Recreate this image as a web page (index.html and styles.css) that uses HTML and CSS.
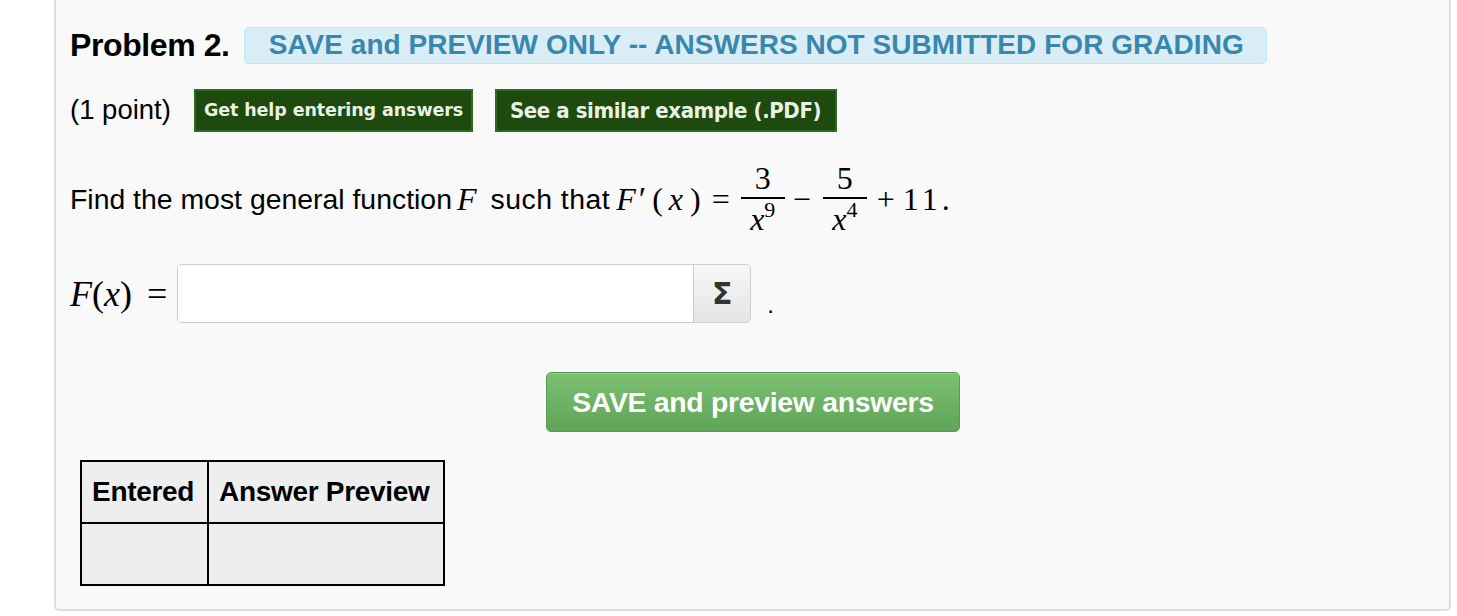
FILE: index.html
```html
<!DOCTYPE html>
<html>
<head>
<meta charset="utf-8">
<link rel="stylesheet" href="styles.css">
</head>
<body>
<div class="page">
  <div class="panel">
    <div class="head-row">
      <h2 class="problem-title">Problem 2.</h2>
      <div class="badge">SAVE and PREVIEW ONLY -- ANSWERS NOT SUBMITTED FOR GRADING</div>
    </div>
    <div class="point-row">
      <span class="points">(1 point)</span>
      <span class="help-btn help-entering">Get help entering answers</span>
      <span class="help-btn help-example">See a similar example (.PDF)</span>
    </div>
    <div class="question">
      <span class="q-text">Find the most general function</span>
      <span class="math var-f"><i>F</i></span>
      <span class="q-text such">such that</span>
      <span class="math fprime"><i>F</i><span class="prime">′</span><span class="paren">(</span><i class="xv">x</i><span class="paren">)</span></span>
      <span class="math op eqop">=</span>
      <span class="frac"><span class="num">3</span><span class="den"><i>x</i><sup>9</sup></span></span>
      <span class="math op minus">−</span>
      <span class="frac"><span class="num">5</span><span class="den"><i>x</i><sup>4</sup></span></span>
      <span class="math op plus">+</span>
      <span class="math eleven">11.</span>
    </div>
    <div class="answer-row">
      <span class="math fx"><i>F</i>(<i>x</i>) <span class="eq">=</span></span>
      <div class="answer-input">
        <div class="input-field"></div>
        <div class="sigma-btn">Σ</div>
      </div>
      <span class="period">.</span>
    </div>
    <div class="submit-row">
      <button class="submit-btn">SAVE and preview answers</button>
    </div>
    <table class="preview-table">
      <tr><th class="col-entered">Entered</th><th class="col-preview">Answer Preview</th></tr>
      <tr><td></td><td></td></tr>
    </table>
  </div>
</div>
</body>
</html>
```
FILE: styles.css
```css
html, body {
  margin: 0;
  padding: 0;
  background: #ffffff;
}
body {
  font-family: "Liberation Sans", Arial, sans-serif;
  color: #000;
}
.page {
  width: 1457px;
  height: 616px;
  overflow: hidden;
  padding-left: 54px;
  box-sizing: border-box;
}
.panel {
  width: 1397px;
  box-sizing: border-box;
  margin-top: -10px;
  height: 621px;
  background: #f9f9f9;
  border: 2px solid #dddddd;
  border-radius: 5px;
  padding: 34px 0 0 14px;
}
.head-row {
  display: flex;
  align-items: center;
  height: 38px;
}
.problem-title {
  margin: 0;
  font-size: 32px;
  font-weight: bold;
  letter-spacing: -0.4px;
}
.badge {
  margin-left: 14px;
  height: 37px;
  width: 1023px;
  box-sizing: border-box;
  background: #d9edf7;
  border: 1px solid #bce8f1;
  border-radius: 5px;
  color: #3a87ad;
  font-weight: bold;
  font-size: 28px;
  letter-spacing: 0.05px;
  display: flex;
  align-items: center;
  padding-left: 24px;
  white-space: nowrap;
}
.point-row {
  display: flex;
  align-items: center;
  margin-top: 24px;
  height: 44px;
}
.points {
  font-size: 27.5px;
  margin-right: 23px;
}
.help-btn {
  display: flex;
  align-items: center;
  height: 43px;
  box-sizing: border-box;
  background: #1e4a10;
  border: 2px solid #2c6a1d;
  color: #e9f3e4;
  font-weight: bold;
  white-space: nowrap;
}
.help-entering {
  width: 279px;
  font-family: "DejaVu Sans", sans-serif;
  font-size: 17.5px;
  letter-spacing: -0.1px;
  padding-left: 8px;
}
.help-example {
  margin-left: 22px;
  width: 342px;
  font-family: "DejaVu Sans Condensed", "DejaVu Sans", sans-serif;
  font-size: 22px;
  letter-spacing: -0.4px;
  padding-left: 13px;
}
.question {
  display: flex;
  align-items: center;
  margin-top: 29px;
  height: 76px;
  white-space: nowrap;
}
.q-text {
  font-size: 28.4px;
  margin-right: 9px;
}
.such {
  letter-spacing: 0.5px;
  margin-right: 6px;
}
.math {
  font-family: "Liberation Serif", "Times New Roman", serif;
  font-size: 32px;
}
.math i { font-style: italic; }
.var-f { margin: 0 14px 0 -4px; }
.prime { font-style: normal; margin: 0 4px 0 3px; font-size: 34px; }
.paren { margin: 0 2px; }
.xv { margin: 0 5px 0 4px; }
.op { margin: 0 10px 0 8px; }
.eqop { margin: 0 11px 0 9px; }
.minus { margin: 0 12px 0 8px; }
.plus { margin: 0 8px 0 10px; }
.eleven { letter-spacing: 4px; }
.frac {
  display: inline-flex;
  flex-direction: column;
  align-items: center;
  font-family: "Liberation Serif", "Times New Roman", serif;
  font-size: 32px;
}
.num {
  line-height: 32px;
  padding: 0 4px 3px;
  border-bottom: 2px solid #000;
  min-width: 36px;
  text-align: center;
}
.den {
  line-height: 36px;
  padding-top: 2px;
}
.den sup {
  font-size: 22px;
  vertical-align: 13px;
  line-height: 0;
}
.answer-row {
  display: flex;
  align-items: center;
  margin-top: 27px;
  height: 59px;
}
.fx {
  font-size: 36px;
  margin-right: 10px;
}
.eq { margin-left: 6px; }
.answer-input {
  display: flex;
  height: 59px;
  width: 574px;
  box-sizing: border-box;
  border: 1px solid #cccccc;
  border-radius: 5px;
  overflow: hidden;
  background: #fff;
}
.input-field {
  flex: 1;
  background: #fff;
  border-right: 1px solid #cccccc;
}
.sigma-btn {
  width: 56px;
  display: flex;
  align-items: center;
  justify-content: center;
  background: linear-gradient(#f7f7f7, #e4e4e4);
  font-family: "DejaVu Sans", sans-serif;
  font-weight: bold;
  font-size: 30px;
  color: #333;
}
.period {
  font-size: 24px;
  margin-left: 16px;
  align-self: flex-end;
  margin-bottom: 4px;
}
.submit-row {
  display: flex;
  margin-top: 49px;
  padding-left: 476px;
}
.submit-btn {
  width: 414px;
  height: 60px;
  border: 1px solid #5a9a52;
  border-radius: 5px;
  background: linear-gradient(#7cc071, #5fa458);
  color: #fff;
  font-family: "Liberation Sans", Arial, sans-serif;
  font-weight: bold;
  font-size: 28.4px;
  letter-spacing: -0.3px;
  box-shadow: inset 0 1px 0 rgba(255,255,255,0.2);
  padding: 0;
}
.preview-table {
  margin-top: 28px;
  margin-left: 10px;
  border-collapse: collapse;
  background: #eeeeee;
}
.preview-table th, .preview-table td {
  border: 2px solid #000;
  height: 60px;
  padding: 0 10px;
  font-size: 28px;
  font-weight: bold;
  text-align: left;
  letter-spacing: -0.3px;
}
.col-entered { width: 105px; }
.col-preview { width: 214px; }
```
